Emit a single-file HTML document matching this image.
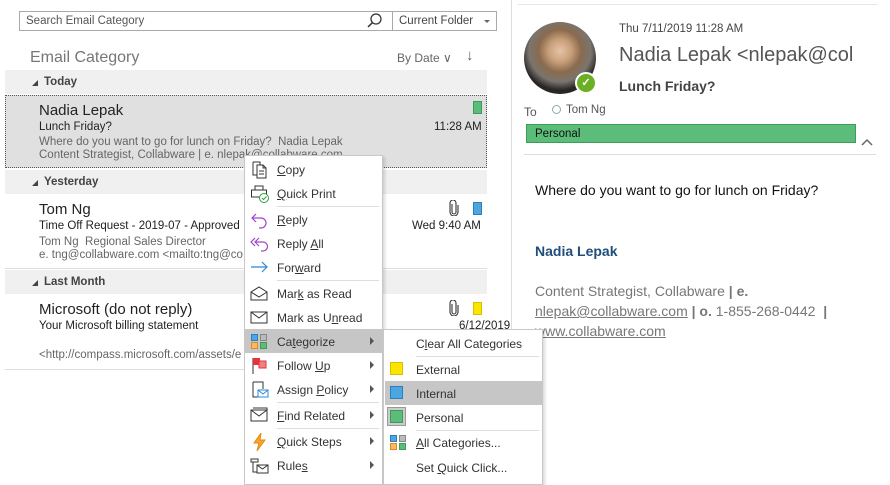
<!DOCTYPE html>
<html><head><meta charset="utf-8">
<style>
*{margin:0;padding:0;box-sizing:border-box}
body{width:890px;height:479px;overflow:hidden;background:#fff;font-family:"Liberation Sans",sans-serif;font-size:12px;color:#222;position:relative}
.a{position:absolute;white-space:nowrap}
.hdr{position:absolute;left:5px;width:482px;height:24px;background:#f0f0f0}
.hdr span{position:absolute;left:39px;top:6px;font-weight:bold;font-size:11.5px;color:#444}
.hdr i{position:absolute;left:27px;top:10px;width:0;height:0;border-left:6px solid transparent;border-bottom:6px solid #444}
.g{color:#666}
.menu{position:absolute;background:#fff;border:1px solid #c8c8c8;box-shadow:2px 2px 3px rgba(0,0,0,.15)}
.mi{position:absolute;left:0;height:24px;width:100%;font-size:12px;color:#333}
.mi span{position:absolute;left:32px;top:6px}
.mi.h{background:#c6c6c6}
.sep{position:absolute;left:32px;right:3px;height:1px;background:#ddd}
.arr{position:absolute;right:8px;top:8px;width:0;height:0;border-top:4px solid transparent;border-bottom:4px solid transparent;border-left:4px solid #555}
.ic{position:absolute;left:5px;top:3px}
u{text-decoration:underline}
</style></head><body>

<div class="a" style="left:19px;top:11px;width:478px;height:20px;border:1px solid #aaa"></div>
<div class="a" style="left:26px;top:15px;font-size:11.5px;color:#555">Search Email Category</div>
<svg class="a" style="left:366px;top:12px" width="18" height="18"><circle cx="10" cy="7" r="5" fill="none" stroke="#333" stroke-width="1.3"/><line x1="6.5" y1="10.5" x2="2" y2="15" stroke="#333" stroke-width="1.5"/></svg>
<div class="a" style="left:392px;top:11px;width:1px;height:20px;background:#aaa"></div>
<div class="a" style="left:399px;top:15px;font-size:11.5px;color:#444">Current Folder</div>
<div class="a" style="left:484px;top:20px;border-left:3px solid transparent;border-right:3px solid transparent;border-top:3px solid #666"></div>

<div class="a" style="left:30px;top:49px;font-size:16px;color:#777">Email Category</div>
<div class="a" style="left:397px;top:51px;font-size:12px;color:#666">By Date ∨</div>
<div class="a" style="left:466px;top:47px;font-size:15px;color:#666">↓</div>

<div class="hdr" style="top:70px"><i></i><span>Today</span></div>
<div class="a" style="left:5px;top:95px;width:482px;height:73px;background:#e0e0e0;border:1px dotted #555"></div>
<div class="a" style="left:39px;top:102px;font-size:15px;color:#222">Nadia Lepak</div>
<div class="a" style="left:39px;top:121px;font-size:11.5px">Lunch Friday?</div>
<div class="a" style="left:434px;top:121px;font-size:11.5px">11:28 AM</div>
<div class="a" style="left:473px;top:101px;width:9px;height:13px;background:#5cbd7a;border:1px solid #3e9c58"></div>
<div class="a g" style="left:39px;top:136px;font-size:11.5px">Where do you want to go for lunch on Friday?&nbsp; Nadia Lepak</div>
<div class="a g" style="left:39px;top:149px;font-size:11.5px">Content Strategist, Collabware | e. nlepak@collabware.com</div>

<div class="hdr" style="top:170px"><i></i><span>Yesterday</span></div>
<div class="a" style="left:39px;top:201px;font-size:15px">Tom Ng</div>
<div class="a" style="left:39px;top:220px;font-size:11.5px">Time Off Request - 2019-07 - Approved</div>
<div class="a g" style="left:39px;top:236px;font-size:11.5px">Tom Ng&nbsp; Regional Sales Director</div>
<div class="a g" style="left:39px;top:249px;font-size:11.5px">e. tng@collabware.com &lt;mailto:tng@co</div>
<div class="a" style="left:412px;top:220px;font-size:11.5px">Wed 9:40 AM</div>
<svg class="a" style="left:449px;top:200px" width="10" height="16"><path d="M3 4v8a2 2 0 0 0 4 0V3a3 3 0 0 0-6 0v9a4 4 0 0 0 8 0V5" fill="none" stroke="#333" stroke-width="1.1"/></svg>
<div class="a" style="left:473px;top:202px;width:9px;height:13px;background:#4ea6e0;border:1px solid #2b7fc0"></div>
<div class="a" style="left:5px;top:268px;width:482px;height:1px;background:#ddd"></div>

<div class="hdr" style="top:270px"><i></i><span>Last Month</span></div>
<div class="a" style="left:39px;top:301px;font-size:15px">Microsoft (do not reply)</div>
<div class="a" style="left:39px;top:320px;font-size:11.5px">Your Microsoft billing statement</div>
<div class="a g" style="left:39px;top:349px;font-size:11.5px">&lt;http://compass.microsoft.com/assets/e</div>
<div class="a" style="left:459px;top:320px;font-size:11.5px">6/12/2019</div>
<svg class="a" style="left:449px;top:300px" width="10" height="16"><path d="M3 4v8a2 2 0 0 0 4 0V3a3 3 0 0 0-6 0v9a4 4 0 0 0 8 0V5" fill="none" stroke="#333" stroke-width="1.1"/></svg>
<div class="a" style="left:473px;top:302px;width:9px;height:13px;background:#fbe500;border:1px solid #d6c000"></div>
<div class="a" style="left:5px;top:369px;width:482px;height:1px;background:#ddd"></div>

<div class="a" style="left:511px;top:0;width:1px;height:479px;background:#ddd"></div>
<div class="a" style="left:518px;top:4px;width:360px;height:1px;background:#e6e6e6"></div>
<div class="a" style="left:524px;top:22px;width:72px;height:72px;border-radius:50%;background:radial-gradient(circle at 50% 40%,#e8c3a8 0,#c9a07a 20%,#8a6a4e 38%,#7a756f 55%,#2a2624 70%)"></div>
<div class="a" style="left:575px;top:72px;width:22px;height:22px;border-radius:50%;background:#6bb024;border:2px solid #fff;color:#fff;font-size:11px;text-align:center;line-height:18px;font-weight:bold">✓</div>
<div class="a" style="left:619px;top:23px;font-size:11.5px;color:#444">Thu 7/11/2019 11:28 AM</div>
<div class="a" style="left:619px;top:44px;font-size:20px;color:#555">Nadia Lepak &lt;nlepak@col</div>
<div class="a" style="left:619px;top:78px;font-size:14px;font-weight:bold;color:#444">Lunch Friday?</div>
<div class="a" style="left:524px;top:105px;font-size:12px;color:#555">To</div>
<div class="a" style="left:552px;top:105px;width:9px;height:9px;border-radius:50%;border:1px solid #8aa"></div>
<div class="a" style="left:566px;top:104px;font-size:11.5px;color:#555">Tom Ng</div>
<div class="a" style="left:526px;top:124px;width:330px;height:19px;background:#5cbd7a;border:1px solid #3e9c58"></div>
<div class="a" style="left:535px;top:128px;font-size:11.5px;color:#111">Personal</div>
<svg class="a" style="left:861px;top:138px" width="12" height="8"><polyline points="1,7 6,2 11,7" fill="none" stroke="#666" stroke-width="1.5"/></svg>
<div class="a" style="left:524px;top:154px;width:352px;height:1px;background:#ddd"></div>
<div class="a" style="left:535px;top:182px;font-size:14px;color:#111">Where do you want to go for lunch on Friday?</div>
<div class="a" style="left:535px;top:243px;font-size:14px;font-weight:bold;color:#1f4e79">Nadia Lepak</div>
<div class="a" style="left:535px;top:283px;font-size:14px;color:#777">Content Strategist, Collabware <b>| e.</b></div>
<div class="a" style="left:535px;top:303px;font-size:14px;color:#777"><u>nlepak@collabware.com</u> <b>| o.</b> 1-855-268-0442&nbsp; <b>|</b></div>
<div class="a" style="left:535px;top:323px;font-size:14px;color:#777"><u>www.collabware.com</u></div>

<div class="menu" style="left:244px;top:155px;width:139px;height:330px">
 <div class="mi" style="top:1px"><svg class="ic" width="20" height="20"><path d="M3 2h7v3M3 2v13h4" fill="none" stroke="#333"/><path d="M7 5h6l3 3v10H7z M13 5v3h3 M9 11h5M9 14h5" fill="none" stroke="#333"/></svg><span><u>C</u>opy</span></div>
 <div class="mi" style="top:25px"><svg class="ic" width="20" height="20"><rect x="5" y="2" width="8" height="4" fill="none" stroke="#333"/><rect x="1.5" y="6" width="15" height="7" fill="none" stroke="#333"/><circle cx="14" cy="14" r="4.5" fill="#fff" stroke="#2ea043"/><path d="M12 14l1.5 1.5 3-3" fill="none" stroke="#2ea043"/></svg><span><u>Q</u>uick Print</span></div>
 <div class="sep" style="top:50px"></div>
 <div class="mi" style="top:51px"><svg class="ic" width="20" height="20"><path d="M6 4L2 8l4 4M2 8h9a5 5 0 0 1 0 10H9" fill="none" stroke="#a347c7" stroke-width="1.2"/></svg><span><u>R</u>eply</span></div>
 <div class="mi" style="top:75px"><svg class="ic" width="20" height="20"><path d="M5 4L1 8l4 4M9 4L5 8l4 4M5 8h8a4.5 4.5 0 0 1 0 9h-2" fill="none" stroke="#a347c7" stroke-width="1.2"/></svg><span>Reply <u>A</u>ll</span></div>
 <div class="mi" style="top:99px"><svg class="ic" width="20" height="20"><path d="M1 9h16M12 4l5 5-5 5" fill="none" stroke="#2b88d8" stroke-width="1.2"/></svg><span>For<u>w</u>ard</span></div>
 <div class="sep" style="top:124px"></div>
 <div class="mi" style="top:125px"><svg class="ic" width="20" height="20"><path d="M1 8l8-5 8 5v8H1z M1 8l8 5 8-5" fill="none" stroke="#333"/></svg><span>Mar<u>k</u> as Read</span></div>
 <div class="mi" style="top:149px"><svg class="ic" width="20" height="20"><path d="M1 4h16v11H1z M1 4l8 6 8-6" fill="none" stroke="#333"/></svg><span>Mark as U<u>n</u>read</span></div>
 <div class="mi h" style="top:173px"><svg class="ic" width="20" height="20"><rect x="1.5" y="2.5" width="6" height="6" fill="#4ea6e0" stroke="#2b7fc0"/><rect x="10.5" y="2.5" width="6" height="6" fill="#bbb" stroke="#888"/><rect x="1.5" y="10.5" width="6" height="6" fill="#f8b96b" stroke="#e08a1e"/><rect x="10.5" y="10.5" width="6" height="6" fill="#5cbd7a" stroke="#3e9c58"/></svg><span>Ca<u>t</u>egorize</span><i class="arr"></i></div>
 <div class="mi" style="top:197px"><svg class="ic" width="20" height="20"><path d="M3 2v16" stroke="#333"/><path d="M3 2h7v7H3z" fill="#e8323c"/><path d="M9 5h7v7H9z" fill="#f08080" stroke="#e8323c"/></svg><span>Follow <u>U</u>p</span><i class="arr"></i></div>
 <div class="mi" style="top:221px"><svg class="ic" width="20" height="20"><path d="M3 2h10v7M3 2v15h5" fill="none" stroke="#333"/><rect x="8" y="10" width="10" height="7" fill="#fff" stroke="#2b88d8"/><path d="M8 10l5 4 5-4" fill="none" stroke="#2b88d8"/></svg><span>Assign <u>P</u>olicy</span><i class="arr"></i></div>
 <div class="sep" style="top:246px"></div>
 <div class="mi" style="top:247px"><svg class="ic" width="20" height="20"><path d="M1 4h16v11H1z M1 4l8 6 8-6 M3 2h14v2" fill="none" stroke="#333"/></svg><span><u>F</u>ind Related</span><i class="arr"></i></div>
 <div class="sep" style="top:272px"></div>
 <div class="mi" style="top:273px"><svg class="ic" width="20" height="20"><path d="M11 1L4 11h5l-2 8 8-11h-5z" fill="#f6a623" stroke="#e08a1e"/></svg><span><u>Q</u>uick Steps</span><i class="arr"></i></div>
 <div class="mi" style="top:297px"><svg class="ic" width="20" height="20"><path d="M1 3h7v3H1z M3 6v10h4" fill="none" stroke="#333"/><path d="M7 9h11v8H7z M7 9l5.5 4 5.5-4" fill="none" stroke="#333"/></svg><span>Rule<u>s</u></span><i class="arr"></i></div>
</div>

<div class="menu" style="left:383px;top:329px;width:160px;height:156px">
 <div class="mi" style="top:1px"><span>C<u>l</u>ear All Categories</span></div>
 <div class="sep" style="top:26px"></div>
 <div class="mi" style="top:27px"><div class="a" style="left:6px;top:5px;width:13px;height:13px;background:#fbe500;border:1px solid #d6c000"></div><span>External</span></div>
 <div class="mi h" style="top:51px;left:1px;width:157px"><div class="a" style="left:5px;top:5px;width:13px;height:13px;background:#4ea6e0;border:1px solid #2b7fc0"></div><span style="left:31px">Internal</span></div>
 <div class="mi" style="top:75px"><div class="a" style="left:3px;top:2px;width:19px;height:19px;background:#ccc;border:1px solid #999"></div><div class="a" style="left:6px;top:5px;width:13px;height:13px;background:#5cbd7a;border:1px solid #3e9c58"></div><span>Personal</span></div>
 <div class="sep" style="top:100px"></div>
 <div class="mi" style="top:100px"><svg class="ic" width="20" height="20"><rect x="1.5" y="2.5" width="6" height="6" fill="#4ea6e0" stroke="#2b7fc0"/><rect x="10.5" y="2.5" width="6" height="6" fill="#bbb" stroke="#888"/><rect x="1.5" y="10.5" width="6" height="6" fill="#f8b96b" stroke="#e08a1e"/><rect x="10.5" y="10.5" width="6" height="6" fill="#5cbd7a" stroke="#3e9c58"/></svg><span><u>A</u>ll Categories...</span></div>
 <div class="mi" style="top:125px"><span>Set <u>Q</u>uick Click...</span></div>
</div>
</body></html>
